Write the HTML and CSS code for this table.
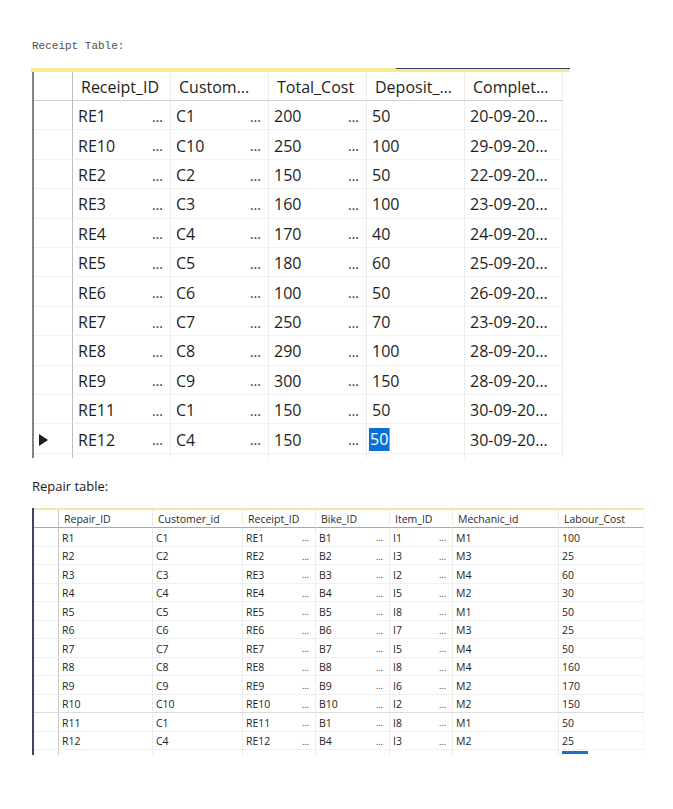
FILE: index.html
```html
<!DOCTYPE html>
<html>
<head>
<meta charset="utf-8">
<link rel="stylesheet" href="styles.css">
</head>
<body>
<div class="page">
  <div class="caption">Receipt Table:</div>
  <div class="receipt">
    <div class="strip"></div>
    <div class="grid">
      <div class="row head"><div class="cell rh"></div><div class="cell">Receipt_ID</div><div class="cell">Custom…</div><div class="cell">Total_Cost</div><div class="cell">Deposit_…</div><div class="cell">Complet…</div></div>
      <div class="row"><div class="cell rh"></div><div class="cell"><span>RE1</span><i>…</i></div><div class="cell"><span>C1</span><i>…</i></div><div class="cell"><span>200</span><i>…</i></div><div class="cell"><span>50</span></div><div class="cell"><span>20-09-20…</span></div></div>
      <div class="row"><div class="cell rh"></div><div class="cell"><span>RE10</span><i>…</i></div><div class="cell"><span>C10</span><i>…</i></div><div class="cell"><span>250</span><i>…</i></div><div class="cell"><span>100</span></div><div class="cell"><span>29-09-20…</span></div></div>
      <div class="row"><div class="cell rh"></div><div class="cell"><span>RE2</span><i>…</i></div><div class="cell"><span>C2</span><i>…</i></div><div class="cell"><span>150</span><i>…</i></div><div class="cell"><span>50</span></div><div class="cell"><span>22-09-20…</span></div></div>
      <div class="row"><div class="cell rh"></div><div class="cell"><span>RE3</span><i>…</i></div><div class="cell"><span>C3</span><i>…</i></div><div class="cell"><span>160</span><i>…</i></div><div class="cell"><span>100</span></div><div class="cell"><span>23-09-20…</span></div></div>
      <div class="row"><div class="cell rh"></div><div class="cell"><span>RE4</span><i>…</i></div><div class="cell"><span>C4</span><i>…</i></div><div class="cell"><span>170</span><i>…</i></div><div class="cell"><span>40</span></div><div class="cell"><span>24-09-20…</span></div></div>
      <div class="row"><div class="cell rh"></div><div class="cell"><span>RE5</span><i>…</i></div><div class="cell"><span>C5</span><i>…</i></div><div class="cell"><span>180</span><i>…</i></div><div class="cell"><span>60</span></div><div class="cell"><span>25-09-20…</span></div></div>
      <div class="row"><div class="cell rh"></div><div class="cell"><span>RE6</span><i>…</i></div><div class="cell"><span>C6</span><i>…</i></div><div class="cell"><span>100</span><i>…</i></div><div class="cell"><span>50</span></div><div class="cell"><span>26-09-20…</span></div></div>
      <div class="row"><div class="cell rh"></div><div class="cell"><span>RE7</span><i>…</i></div><div class="cell"><span>C7</span><i>…</i></div><div class="cell"><span>250</span><i>…</i></div><div class="cell"><span>70</span></div><div class="cell"><span>23-09-20…</span></div></div>
      <div class="row"><div class="cell rh"></div><div class="cell"><span>RE8</span><i>…</i></div><div class="cell"><span>C8</span><i>…</i></div><div class="cell"><span>290</span><i>…</i></div><div class="cell"><span>100</span></div><div class="cell"><span>28-09-20…</span></div></div>
      <div class="row"><div class="cell rh"></div><div class="cell"><span>RE9</span><i>…</i></div><div class="cell"><span>C9</span><i>…</i></div><div class="cell"><span>300</span><i>…</i></div><div class="cell"><span>150</span></div><div class="cell"><span>28-09-20…</span></div></div>
      <div class="row"><div class="cell rh"></div><div class="cell"><span>RE11</span><i>…</i></div><div class="cell"><span>C1</span><i>…</i></div><div class="cell"><span>150</span><i>…</i></div><div class="cell"><span>50</span></div><div class="cell"><span>30-09-20…</span></div></div>
      <div class="row"><div class="cell rh"><svg class="arrow" width="9" height="12" viewBox="0 0 9 12"><polygon points="0,0 9,6 0,12" fill="#1e1e1e"/></svg></div><div class="cell"><span>RE12</span><i>…</i></div><div class="cell"><span>C4</span><i>…</i></div><div class="cell"><span>150</span><i>…</i></div><div class="cell"><span class="sel">50</span></div><div class="cell"><span>30-09-20…</span></div></div>
      <div class="row"><div class="cell rh"></div><div class="cell"></div><div class="cell"></div><div class="cell"></div><div class="cell"></div><div class="cell"></div></div>
    </div>
  </div>

  <div class="rlabel">Repair table:</div>
  <div class="repair">
    <div class="strip"></div>
    <div class="row head"><div class="cell rh"></div><div class="cell">Repair_ID</div><div class="cell">Customer_id</div><div class="cell">Receipt_ID</div><div class="cell">Bike_ID</div><div class="cell">Item_ID</div><div class="cell">Mechanic_id</div><div class="cell">Labour_Cost</div></div>
    <div class="row"><div class="cell rh"></div><div class="cell">R1</div><div class="cell">C1</div><div class="cell"><span>RE1</span><i>…</i></div><div class="cell"><span>B1</span><i>…</i></div><div class="cell"><span>I1</span><i>…</i></div><div class="cell">M1</div><div class="cell">100</div></div>
    <div class="row"><div class="cell rh"></div><div class="cell">R2</div><div class="cell">C2</div><div class="cell"><span>RE2</span><i>…</i></div><div class="cell"><span>B2</span><i>…</i></div><div class="cell"><span>I3</span><i>…</i></div><div class="cell">M3</div><div class="cell">25</div></div>
    <div class="row"><div class="cell rh"></div><div class="cell">R3</div><div class="cell">C3</div><div class="cell"><span>RE3</span><i>…</i></div><div class="cell"><span>B3</span><i>…</i></div><div class="cell"><span>I2</span><i>…</i></div><div class="cell">M4</div><div class="cell">60</div></div>
    <div class="row"><div class="cell rh"></div><div class="cell">R4</div><div class="cell">C4</div><div class="cell"><span>RE4</span><i>…</i></div><div class="cell"><span>B4</span><i>…</i></div><div class="cell"><span>I5</span><i>…</i></div><div class="cell">M2</div><div class="cell">30</div></div>
    <div class="row"><div class="cell rh"></div><div class="cell">R5</div><div class="cell">C5</div><div class="cell"><span>RE5</span><i>…</i></div><div class="cell"><span>B5</span><i>…</i></div><div class="cell"><span>I8</span><i>…</i></div><div class="cell">M1</div><div class="cell">50</div></div>
    <div class="row"><div class="cell rh"></div><div class="cell">R6</div><div class="cell">C6</div><div class="cell"><span>RE6</span><i>…</i></div><div class="cell"><span>B6</span><i>…</i></div><div class="cell"><span>I7</span><i>…</i></div><div class="cell">M3</div><div class="cell">25</div></div>
    <div class="row"><div class="cell rh"></div><div class="cell">R7</div><div class="cell">C7</div><div class="cell"><span>RE7</span><i>…</i></div><div class="cell"><span>B7</span><i>…</i></div><div class="cell"><span>I5</span><i>…</i></div><div class="cell">M4</div><div class="cell">50</div></div>
    <div class="row"><div class="cell rh"></div><div class="cell">R8</div><div class="cell">C8</div><div class="cell"><span>RE8</span><i>…</i></div><div class="cell"><span>B8</span><i>…</i></div><div class="cell"><span>I8</span><i>…</i></div><div class="cell">M4</div><div class="cell">160</div></div>
    <div class="row"><div class="cell rh"></div><div class="cell">R9</div><div class="cell">C9</div><div class="cell"><span>RE9</span><i>…</i></div><div class="cell"><span>B9</span><i>…</i></div><div class="cell"><span>I6</span><i>…</i></div><div class="cell">M2</div><div class="cell">170</div></div>
    <div class="row sep"><div class="cell rh"></div><div class="cell">R10</div><div class="cell">C10</div><div class="cell"><span>RE10</span><i>…</i></div><div class="cell"><span>B10</span><i>…</i></div><div class="cell"><span>I2</span><i>…</i></div><div class="cell">M2</div><div class="cell">150</div></div>
    <div class="row"><div class="cell rh"></div><div class="cell">R11</div><div class="cell">C1</div><div class="cell"><span>RE11</span><i>…</i></div><div class="cell"><span>B1</span><i>…</i></div><div class="cell"><span>I8</span><i>…</i></div><div class="cell">M1</div><div class="cell">50</div></div>
    <div class="row"><div class="cell rh"></div><div class="cell">R12</div><div class="cell">C4</div><div class="cell"><span>RE12</span><i>…</i></div><div class="cell"><span>B4</span><i>…</i></div><div class="cell"><span>I3</span><i>…</i></div><div class="cell">M2</div><div class="cell">25</div></div>
    <div class="row tail"><div class="cell rh"></div><div class="cell"></div><div class="cell"></div><div class="cell"></div><div class="cell"></div><div class="cell"></div><div class="cell"></div><div class="cell"><b class="edit"></b></div></div>
  </div>
</div>
</body>
</html>
```

FILE: styles.css
```css
* { box-sizing: border-box; margin: 0; padding: 0; }
html, body { background: #ffffff; }
body {
  width: 673px;
  height: 809px;
  overflow: hidden;
  font-family: "Open Sans", "Noto Sans", sans-serif;
  color: #1e1e1e;
}
.page { padding-top: 39px; }

.caption {
  font-family: "Liberation Mono", monospace;
  font-size: 11px;
  line-height: 14px;
  color: #505050;
  margin-left: 32px;
}

/* ---------- Receipt table ---------- */
.receipt { margin: 15px 0 0 31px; width: 539px; }
.receipt .strip {
  height: 4px;
  background:
    linear-gradient(to right, #f6ea92 365px, #3a4252 365px) top left / 100% 1px no-repeat,
    #f6ea92;
}
.receipt .grid {
  margin-left: 1px;
  width: 531px;
  height: 386px;
  overflow: hidden;
  border-left: 2px solid #80848f;
}
.receipt .row {
  display: grid;
  grid-template-columns: 39px repeat(5, 98px);
  height: 29.42px;
  font-size: 16px;
}
.receipt .row.head { height: 29px; }

.cell {
  display: flex;
  align-items: center;
  justify-content: space-between;
  white-space: nowrap;
  overflow: hidden;
  border-right: 1px solid #ececec;
  border-bottom: 1px solid #f0f0f0;
}
.cell i { font-style: normal; color: #333; }
.cell.rh { border-right-color: #bdbdbd; justify-content: flex-start; }

.receipt .cell { padding: 2px 7px 0 5px; }
.receipt .cell.rh { padding: 0 0 0 5px; }
.receipt .head .cell {
  padding: 1px 0 0 8px;
  border-bottom-color: #cdcdcd;
  color: #1e1e1e;
}
.receipt .cell i { font-size: 14px; align-self: center; }

.arrow { display: block; margin-top: 2px; }

.sel {
  background: #0a6fd6;
  color: #ffffff;
  line-height: 23px;
  padding: 0 1px 0 1px;
  margin-left: -3px;
  border-right: 1px solid #e98a4a;
}

/* ---------- Repair table ---------- */
.rlabel {
  font-size: 13px;
  line-height: 18px;
  margin: 19px 0 0 32px;
  color: #1a1a1a;
}
.repair {
  margin: 13px 0 0 32px;
  width: 612px;
  height: 247px;
  overflow: hidden;
  border-left: 2px solid #3e4566;
}
.repair .strip { height: 2px; background: #f2e7a4; }
.repair .row {
  display: grid;
  grid-template-columns: 25px 94px 90px 73px 74px 63px 106px 85px;
  height: 18.5px;
  font-size: 10.5px;
}
.repair .row.head { height: 18px; }
.repair .cell { padding: 2px 6px 0 3px; }
.repair .cell:last-child { border-right-color: #f6f6f6; }
.repair .head .cell {
  padding: 1px 0 0 5px;
  border-bottom-color: #a9a9a9;
  color: #2a2a2a;
}
.repair .cell.rh { border-right-color: #c9c9c9; }
.repair .row.sep .cell { border-bottom-color: #dcdcdc; }
.repair .cell i { font-size: 9px; }
.repair .tail .cell { align-items: flex-start; padding-top: 0; }
.edit {
  display: block;
  width: 26px;
  height: 3px;
  margin-top: 1px;
  background: #1b6ec9;
}
```
